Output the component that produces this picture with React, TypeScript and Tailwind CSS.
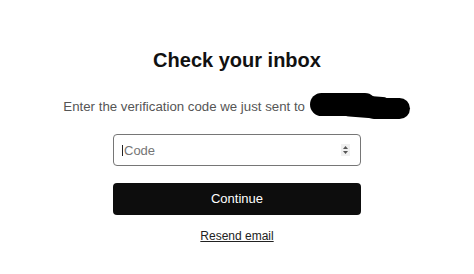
import React from "react";

export default function App() {
  return (
    <div className="w-[474px] h-[274px] bg-white flex flex-col items-center pt-[48px] font-['Liberation_Sans',Arial,sans-serif]">
      <h1 className="text-[20px] leading-[24px] font-bold text-[#111111]">Check your inbox</h1>
      <div className="mt-[25px] flex items-start h-[20px] text-[13.25px] leading-[20px] text-[#555555]">
        <span>Enter the verification code we just sent to&nbsp;</span>
        <svg width="101" height="27" viewBox="0 0 101 27" className="ml-[1px] -mt-[4px]" aria-hidden="true">
          <g stroke="#000" strokeLinecap="round" fill="none">
            <line x1="11.5" y1="11.5" x2="55" y2="11.5" strokeWidth="23" />
            <line x1="40" y1="12.5" x2="72" y2="15" strokeWidth="22" />
            <line x1="64" y1="15.5" x2="89.5" y2="15.5" strokeWidth="21" />
          </g>
        </svg>
      </div>
      <div className="relative mt-[17px] w-[248px] h-[32px]">
        <input
          type="text"
          placeholder="Code"
          className="w-full h-full rounded-[4px] border border-[#767676] bg-white pl-[10px] pr-[24px] text-[13px] text-[#111] placeholder:text-[#757575] outline-none"
        />
        <span className="absolute left-[9px] top-[11px] w-px h-[11px] bg-[#222]" />
        <div className="absolute right-[11px] top-[10px] w-[9px] h-[12px] bg-[#f0f0f0] flex flex-col items-center justify-center gap-[2px]">
          <svg width="5" height="3" viewBox="0 0 5 3"><polygon points="2.5,0 5,3 0,3" fill="#555" /></svg>
          <svg width="5" height="3" viewBox="0 0 5 3"><polygon points="0,0 5,0 2.5,3" fill="#555" /></svg>
        </div>
      </div>
      <button className="mt-[17px] w-[248px] h-[32px] rounded-[4px] bg-[#0d0d0d] text-white text-[13px]">
        Continue
      </button>
      <a href="#" className="mt-[13px] text-[12px] leading-[16px] text-[#222] underline">
        Resend email
      </a>
    </div>
  );
}
